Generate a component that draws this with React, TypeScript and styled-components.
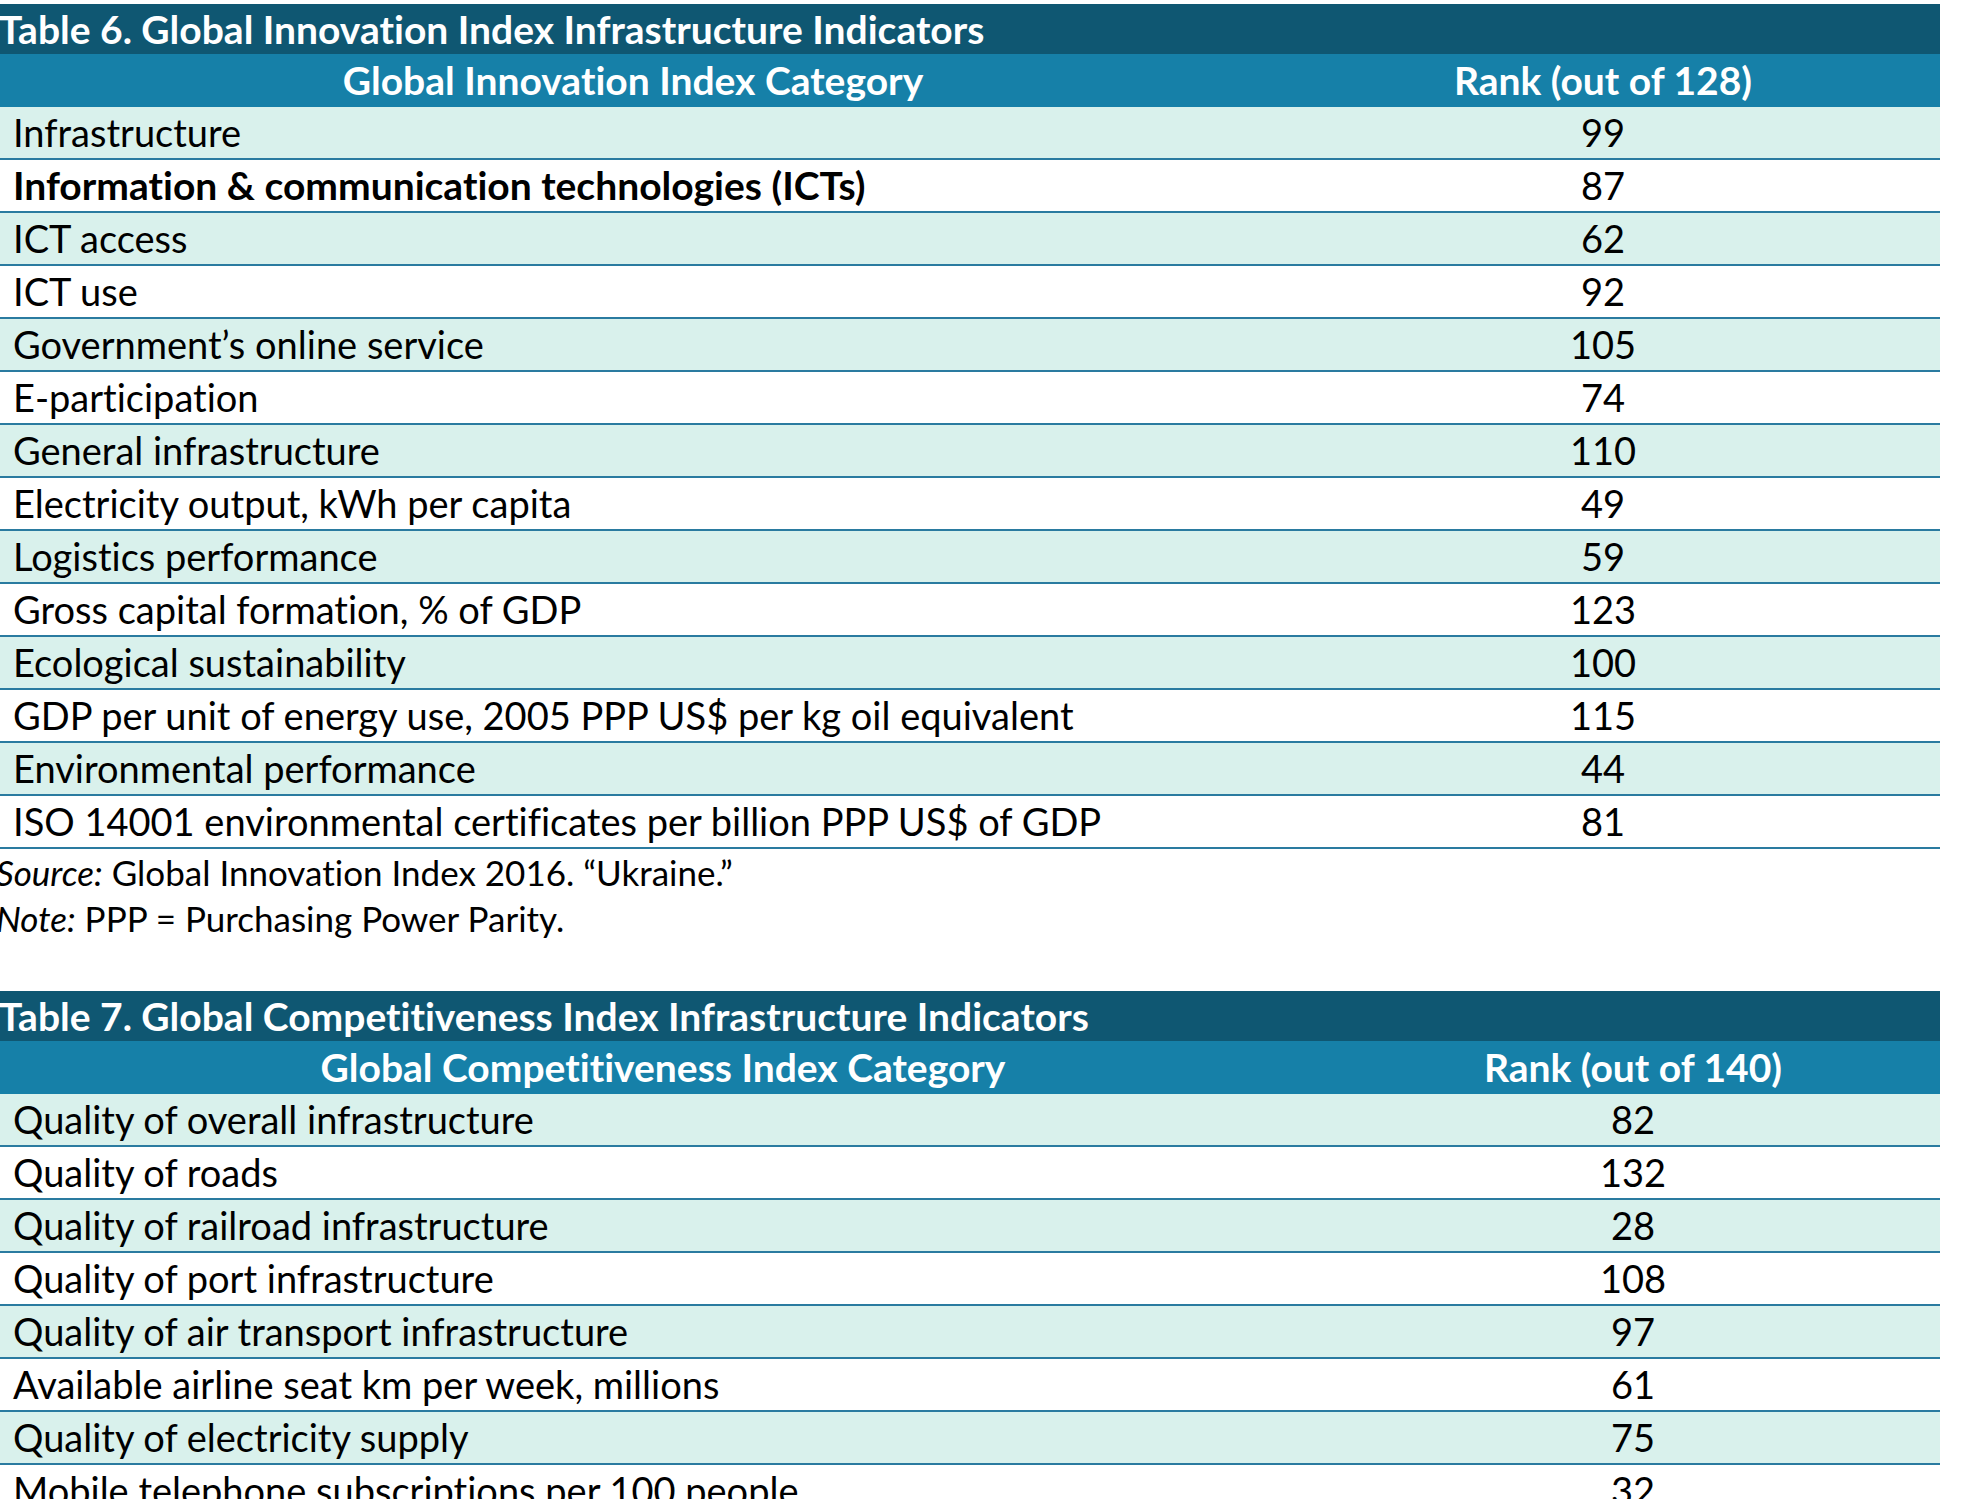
import React from "react";
import styled, { createGlobalStyle } from "styled-components";

const GlobalStyle = createGlobalStyle`
  html, body {
    margin: 0;
    padding: 0;
    background: #ffffff;
  }
  body {
    font-family: "Lato", "Liberation Sans", sans-serif;
    font-variant-ligatures: none;
    color: #000000;
    overflow: hidden;
  }
`;

const Page = styled.div`
  width: 1979px;
  height: 1499px;
  overflow: hidden;
  padding-top: 4px;
  box-sizing: border-box;
  display: flex;
  flex-direction: column;
  & > * {
    flex-shrink: 0;
  }
`;

const TableBlock = styled.section<{ $cols: string }>`
  width: 1940px;
  display: grid;
  grid-template-columns: ${(p) => p.$cols};
`;

const TitleBar = styled.div`
  grid-column: 1 / -1;
  height: 50px;
  background: #0f5772;
  color: #ffffff;
  font-weight: 700;
  font-size: 39px;
  line-height: 50px;
  white-space: nowrap;
  text-indent: -1px;
`;

const HeadCell = styled.div`
  height: 53px;
  background: #1680a8;
  color: #ffffff;
  font-weight: 700;
  font-size: 39px;
  line-height: 53px;
  text-align: center;
  white-space: nowrap;
`;

const Cell = styled.div<{ $shade: boolean; $bold?: boolean; $center?: boolean }>`
  height: 51px;
  border-bottom: 2px solid #2a7ba0;
  background: ${(p) => (p.$shade ? "#d9f1ec" : "#ffffff")};
  font-size: ${(p) => (p.$bold ? "39px" : "38px")};
  line-height: 51px;
  font-weight: ${(p) => (p.$bold ? 700 : 400)};
  text-align: ${(p) => (p.$center ? "center" : "left")};
  padding-left: ${(p) => (p.$center ? "0" : "13px")};
  white-space: nowrap;
`;

const Notes = styled.div`
  margin-left: -4px;
  font-size: 35px;
  line-height: 46px;
  white-space: nowrap;
`;

const NoteLine = styled.div``;

const Spacer = styled.div`
  height: 50px;
`;

type Row = { label: string; rank: string; bold?: boolean };

const table6: Row[] = [
  { label: "Infrastructure", rank: "99" },
  { label: "Information & communication technologies (ICTs)", rank: "87", bold: true },
  { label: "ICT access", rank: "62" },
  { label: "ICT use", rank: "92" },
  { label: "Government’s online service", rank: "105" },
  { label: "E-participation", rank: "74" },
  { label: "General infrastructure", rank: "110" },
  { label: "Electricity output, kWh per capita", rank: "49" },
  { label: "Logistics performance", rank: "59" },
  { label: "Gross capital formation, % of GDP", rank: "123" },
  { label: "Ecological sustainability", rank: "100" },
  { label: "GDP per unit of energy use, 2005 PPP US$ per kg oil equivalent", rank: "115" },
  { label: "Environmental performance", rank: "44" },
  { label: "ISO 14001 environmental certificates per billion PPP US$ of GDP", rank: "81" },
];

const table7: Row[] = [
  { label: "Quality of overall infrastructure", rank: "82" },
  { label: "Quality of roads", rank: "132" },
  { label: "Quality of railroad infrastructure", rank: "28" },
  { label: "Quality of port infrastructure", rank: "108" },
  { label: "Quality of air transport infrastructure", rank: "97" },
  { label: "Available airline seat km per week, millions", rank: "61" },
  { label: "Quality of electricity supply", rank: "75" },
  { label: "Mobile telephone subscriptions per 100 people", rank: "32" },
];

function DataTable(props: {
  title: string;
  category: string;
  rankHead: string;
  cols: string;
  rows: Row[];
}) {
  return (
    <TableBlock $cols={props.cols}>
      <TitleBar>{props.title}</TitleBar>
      <HeadCell>{props.category}</HeadCell>
      <HeadCell>{props.rankHead}</HeadCell>
      {props.rows.map((r, i) => (
        <React.Fragment key={r.label}>
          <Cell $shade={i % 2 === 0} $bold={r.bold}>
            {r.label}
          </Cell>
          <Cell $shade={i % 2 === 0} $center>
            {r.rank}
          </Cell>
        </React.Fragment>
      ))}
    </TableBlock>
  );
}

export default function App() {
  return (
    <>
      <GlobalStyle />
      <Page>
        <DataTable
          title="Table 6. Global Innovation Index Infrastructure Indicators"
          category="Global Innovation Index Category"
          rankHead="Rank (out of 128)"
          cols="1266px 674px"
          rows={table6}
        />
        <Notes>
          <NoteLine>
            <i>Source:</i> Global Innovation Index 2016. “Ukraine.”
          </NoteLine>
          <NoteLine>
            <i>Note:</i> PPP = Purchasing Power Parity.
          </NoteLine>
        </Notes>
        <Spacer />
        <DataTable
          title="Table 7. Global Competitiveness Index Infrastructure Indicators"
          category="Global Competitiveness Index Category"
          rankHead="Rank (out of 140)"
          cols="1326px 614px"
          rows={table7}
        />
      </Page>
    </>
  );
}
